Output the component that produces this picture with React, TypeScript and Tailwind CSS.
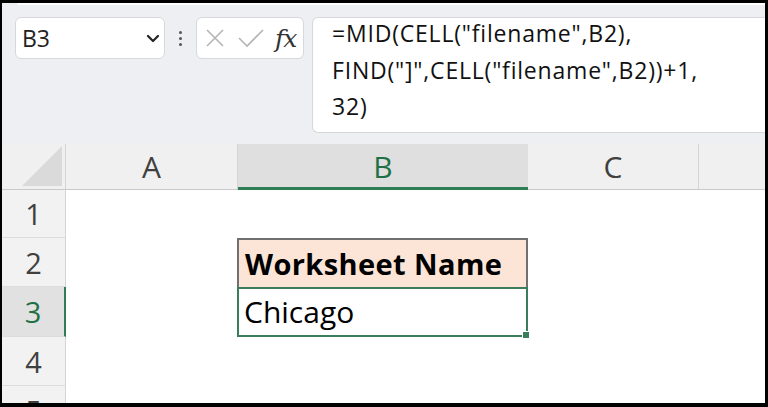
import React from "react";

const hdr = "font-['Open_Sans',sans-serif]";

function RowHeader({ n, h, selected }: { n: number; h: string; selected?: boolean }) {
  return (
    <div
      className={`${h} w-[64px] shrink-0 flex items-center justify-center border-b border-[#dcdcdc] ${
        selected
          ? "bg-[#e1e1e1] text-[#1e7145] border-r-[2px] border-r-[#2f7d55]"
          : "bg-[#f2f2f2] text-[#404040] border-r border-r-[#d4d4d4]"
      } ${hdr} text-[29px] leading-none`}
    >
      {n}
    </div>
  );
}

export default function App() {
  return (
    <div className="w-[768px] h-[407px] bg-black pt-[3px] pl-[2px] pr-[3px] pb-[4px]">
      <div className="w-full h-full bg-[#edeff2] overflow-hidden flex flex-col">
        {/* toolbar */}
        <div className="h-[141px] shrink-0 relative flex flex-col">
          <div className="h-[2px] ml-[15px] bg-white rounded-bl-[6px]" />
          <div className="flex items-start pt-[12px]">
            {/* name box */}
            <div className="ml-[13px] w-[150px] h-[42px] bg-white border border-[#d6d8db] rounded-[6px] flex items-center pl-[6px] pr-[2px]">
              <span className={`${hdr} text-[23px] text-[#222] leading-none flex-1`}>B3</span>
              <svg width="14" height="9" viewBox="0 0 14 9" className="mr-[2px]">
                <path d="M2 2 L7 7 L12 2" fill="none" stroke="#222" strokeWidth="2.2" strokeLinecap="round" strokeLinejoin="round" />
              </svg>
            </div>
            {/* dots */}
            <div className="w-[31px] h-[42px] flex flex-col items-center justify-center gap-[3px]">
              <div className="w-[3px] h-[3px] rounded-full bg-[#555]" />
              <div className="w-[3px] h-[3px] rounded-full bg-[#555]" />
              <div className="w-[3px] h-[3px] rounded-full bg-[#555]" />
            </div>
            {/* fx box */}
            <div className="w-[108px] h-[42px] bg-white border border-[#d6d8db] rounded-[6px] flex items-center pl-[8px]">
              <svg width="20" height="20" viewBox="0 0 20 20">
                <path d="M2 2 L18 18 M18 2 L2 18" stroke="#b4b4b4" strokeWidth="1.6" fill="none" />
              </svg>
              <svg width="26" height="20" viewBox="0 0 26 20" className="ml-[13px]">
                <path d="M1 10 L9 18 L25 2" stroke="#b4b4b4" strokeWidth="1.6" fill="none" />
              </svg>
              <span className="ml-[11px] font-['DejaVu_Serif',serif] italic text-[25px] leading-none text-[#333] tracking-[-1px]">
                fx
              </span>
            </div>
            {/* formula box */}
            <div className="ml-[8px] flex-1 h-[116px] bg-white border border-[#d6d8db] border-r-0 rounded-l-[6px] pl-[19px] pt-[1px]">
              <div className={`${hdr} text-[23px] leading-[28px] tracking-[0.8px] text-[#111] flex flex-col gap-[8.5px]`}>
                <div>=MID(CELL("filename",B2),</div>
                <div>FIND("]",CELL("filename",B2))+1,</div>
                <div>32)</div>
              </div>
            </div>
          </div>
        </div>

        {/* sheet */}
        <div className="flex-1 bg-white flex flex-col">
          {/* column header */}
          <div className="h-[46px] shrink-0 flex bg-[#f0f0f0] border-b border-[#c9c9c9]">
            <div className="w-[64px] shrink-0 relative border-r border-[#d4d4d4]">
              <svg width="40" height="40" viewBox="0 0 40 40" className="absolute right-[3px] bottom-[3px]">
                <polygon points="40,0 40,40 0,40" fill="#dadada" />
              </svg>
            </div>
            <div className={`w-[172px] shrink-0 flex items-center justify-center border-r border-[#d4d4d4] ${hdr} text-[30px] text-[#404040] leading-none`}>
              A
            </div>
            <div className={`w-[290px] shrink-0 flex items-center justify-center bg-[#dfdfdf] border-b-[3px] border-[#2f7d55] mb-[-1px] ${hdr} text-[30px] text-[#1e7145] leading-none pt-[3px]`}>
              B
            </div>
            <div className={`w-[171px] shrink-0 flex items-center justify-center border-r border-[#d4d4d4] ${hdr} text-[30px] text-[#404040] leading-none`}>
              C
            </div>
            <div className="flex-1" />
          </div>

          {/* row 1 */}
          <div className="flex">
            <RowHeader n={1} h="h-[48px]" />
            <div className="flex-1" />
          </div>
          {/* row 2 */}
          <div className="flex">
            <RowHeader n={2} h="h-[49px]" />
            <div className="w-[171px] shrink-0" />
            <div className="w-[291px] shrink-0 h-[49px] bg-[#fce4d6] border-t-[2px] border-x-[2px] border-[#707070] flex items-center pl-[6px]">
              <span className="font-['Open_Sans',sans-serif] font-bold text-[29px] leading-none text-black tracking-[0.4px]">
                Worksheet Name
              </span>
            </div>
            <div className="flex-1" />
          </div>
          {/* row 3 */}
          <div className="flex">
            <RowHeader n={3} h="h-[50px]" selected />
            <div className="w-[171px] shrink-0" />
            <div className="w-[291px] shrink-0 h-[50px] relative border-[2px] border-[#3a7d5a] flex items-center pl-[5px]">
              <span className="font-['Open_Sans',sans-serif] text-[30px] leading-none text-black">Chicago</span>
              <div className="absolute right-[-4px] bottom-[-4px] w-[6px] h-[6px] bg-[#3a7d5a] border border-white box-content" />
            </div>
            <div className="flex-1" />
          </div>
          {/* row 4 */}
          <div className="flex">
            <RowHeader n={4} h="h-[49px]" />
            <div className="flex-1" />
          </div>
          {/* row 5 */}
          <div className="flex">
            <div className={`h-[49px] w-[64px] shrink-0 flex items-start justify-center pt-[10px] bg-[#f2f2f2] text-[#404040] border-r border-[#d4d4d4] ${hdr} text-[29px] leading-none`}>
              5
            </div>
            <div className="flex-1" />
          </div>
        </div>
      </div>
    </div>
  );
}
